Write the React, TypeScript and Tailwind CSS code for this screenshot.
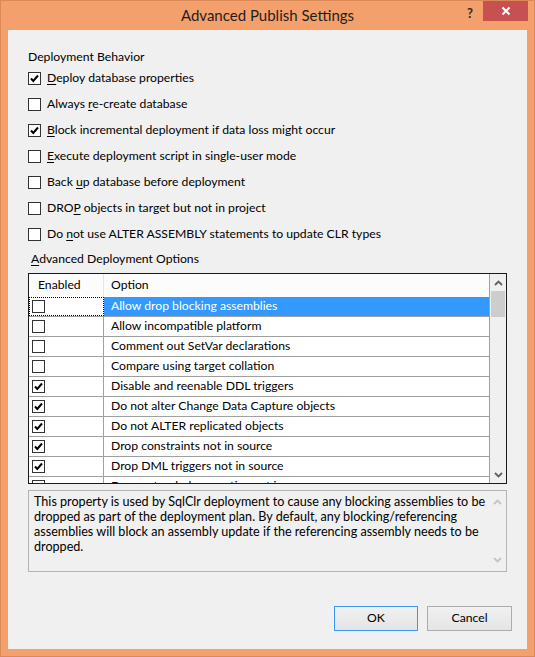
import React from "react";

type Behavior = {
    checked: boolean;
    pre: string;
    key: string;
    post: string;
};

const behaviors: Behavior[] = [
    { checked: true, pre: "", key: "D", post: "eploy database properties" },
    { checked: false, pre: "Always ", key: "r", post: "e-create database" },
    { checked: true, pre: "", key: "B", post: "lock incremental deployment if data loss might occur" },
    { checked: false, pre: "", key: "E", post: "xecute deployment script in single-user mode" },
    { checked: false, pre: "Back ", key: "u", post: "p database before deployment" },
    { checked: false, pre: "DRO", key: "P", post: " objects in target but not in project" },
    { checked: false, pre: "Do ", key: "n", post: "ot use ALTER ASSEMBLY statements to update CLR types" },
];

const options: { name: string; enabled: boolean }[] = [
    { name: "Allow drop blocking assemblies", enabled: false },
    { name: "Allow incompatible platform", enabled: false },
    { name: "Comment out SetVar declarations", enabled: false },
    { name: "Compare using target collation", enabled: false },
    { name: "Disable and reenable DDL triggers", enabled: true },
    { name: "Do not alter Change Data Capture objects", enabled: true },
    { name: "Do not ALTER replicated objects", enabled: true },
    { name: "Drop constraints not in source", enabled: true },
    { name: "Drop DML triggers not in source", enabled: true },
    { name: "Drop extended properties not in source", enabled: true },
];

const description = [
    "This property is used by SqlClr deployment to cause any blocking assemblies to be",
    "dropped as part of the deployment plan. By default, any blocking/referencing",
    "assemblies will block an assembly update if the referencing assembly needs to be",
    "dropped.",
];

function CheckBox({ checked }: { checked: boolean }) {
    return (
        <span className="flex h-[13px] w-[13px] shrink-0 items-center justify-center border border-[#333333] bg-white">
            {checked && (
                <svg width="11" height="11" viewBox="0 0 11 11">
                    <path d="M2 5.5 L4.3 8 L9 2.5" fill="none" stroke="#000" strokeWidth="2" />
                </svg>
            )}
        </span>
    );
}

function Chevron({ up, color }: { up: boolean; color: string }) {
    return (
        <svg width="9" height="6" viewBox="0 0 9 6">
            <path
                d={up ? "M1 5 L4.5 1.5 L8 5" : "M1 1 L4.5 4.5 L8 1"}
                fill="none"
                stroke={color}
                strokeWidth="1.8"
            />
        </svg>
    );
}

export default function App() {
    return (
        <div className="flex h-[657px] w-[535px] flex-col border border-[#d98a58] bg-[#f4a06c] font-['Lato','Liberation_Sans',sans-serif] text-[12.2px] text-black">
            {/* title bar */}
            <div className="grid h-[29px] shrink-0 grid-cols-[1fr_auto_1fr]">
                <div />
                <div className="flex items-center text-[15px] text-[#1e1e1e]">Advanced Publish Settings</div>
                <div className="flex items-start justify-end pr-[6px]">
                    <span className="mr-[10px] mt-[3px] text-[13px] font-bold text-[#2b2b2b]">?</span>
                    <button className="flex h-[20px] w-[45px] items-center justify-center bg-[#c75050]">
                        <svg width="10" height="10" viewBox="0 0 10 10">
                            <path d="M1.5 1.5 L8.5 8.5 M8.5 1.5 L1.5 8.5" stroke="#fff" strokeWidth="2" />
                        </svg>
                    </button>
                </div>
            </div>

            {/* client area */}
            <div className="mx-[7px] flex h-[619px] shrink-0 flex-col bg-[#f0f0f0] px-[20px] pt-[19px]">
                <div className="h-[16px] leading-[16px]">Deployment Behavior</div>
                {behaviors.map((b) => (
                    <div key={b.post} className="flex h-[26px] items-center gap-[6px]">
                        <CheckBox checked={b.checked} />
                        <span className="whitespace-nowrap leading-[16px]">
                            {b.pre}
                            <u className="underline-offset-2">{b.key}</u>
                            {b.post}
                        </span>
                    </div>
                ))}
                <div className="mt-[4px] h-[16px] pl-[3px] leading-[16px]">
                    <u className="underline-offset-2">A</u>dvanced Deployment Options
                </div>

                {/* options grid */}
                <div className="mt-[6px] flex h-[211px] shrink-0 overflow-hidden border border-[#1b1b1b] bg-white">
                    <div className="flex w-[461px] flex-col border-r border-[#a0a0a0]">
                        <div className="flex h-[23px] shrink-0 items-center bg-[#fcfcfc]">
                            <div className="flex h-full w-[75px] items-center border-r border-[#e5e5e5] pl-[9px]">Enabled</div>
                            <div className="pl-[7px]">Option</div>
                        </div>
                        {options.map((o, i) => (
                            <div key={o.name} className="flex h-[20px] shrink-0 border-b border-[#a0a0a0]">
                                <div
                                    className={
                                        i === 0
                                            ? "flex w-[75px] items-center border border-dotted border-black pl-[2px]"
                                            : "flex w-[75px] items-center border-r border-[#a0a0a0] pl-[3px]"
                                    }
                                >
                                    <CheckBox checked={o.enabled} />
                                </div>
                                <div
                                    className={
                                        i === 0
                                            ? "flex flex-1 items-center whitespace-nowrap bg-[#3399ff] pl-[7px] text-white"
                                            : "flex flex-1 items-center whitespace-nowrap pl-[7px]"
                                    }
                                >
                                    {o.name}
                                </div>
                            </div>
                        ))}
                    </div>
                    <div className="flex w-[16px] flex-col bg-[#f0f0f0]">
                        <div className="flex h-[17px] items-center justify-center">
                            <Chevron up color="#606060" />
                        </div>
                        <div className="mx-[1px] h-[26px] bg-[#cdcdcd]" />
                        <div className="flex-1" />
                        <div className="flex h-[17px] items-center justify-center">
                            <Chevron up={false} color="#606060" />
                        </div>
                    </div>
                </div>

                {/* description */}
                <div className="mt-[6px] flex h-[82px] shrink-0 border border-[#b4b4b4] bg-[#f0f0f0]">
                    <div className="flex-1 pl-[5px] pt-[3px] text-[12.6px] leading-[15px]">
                        {description.map((line) => (
                            <div key={line} className="whitespace-nowrap">
                                {line}
                            </div>
                        ))}
                    </div>
                    <div className="flex w-[17px] flex-col items-center justify-between py-[8px]">
                        <Chevron up color="#c4c4c4" />
                        <Chevron up={false} color="#c4c4c4" />
                    </div>
                </div>

                {/* buttons */}
                <div className="mr-[-5px] mt-[34px] flex justify-end gap-[9px]">
                    <button className="flex h-[25px] w-[84px] items-center justify-center border border-[#3399ff] bg-gradient-to-b from-[#f0f0f0] to-[#e5e5e5]">
                        OK
                    </button>
                    <button className="flex h-[25px] w-[85px] items-center justify-center border border-[#acacac] bg-gradient-to-b from-[#f0f0f0] to-[#e5e5e5]">
                        Cancel
                    </button>
                </div>
            </div>
        </div>
    );
}
